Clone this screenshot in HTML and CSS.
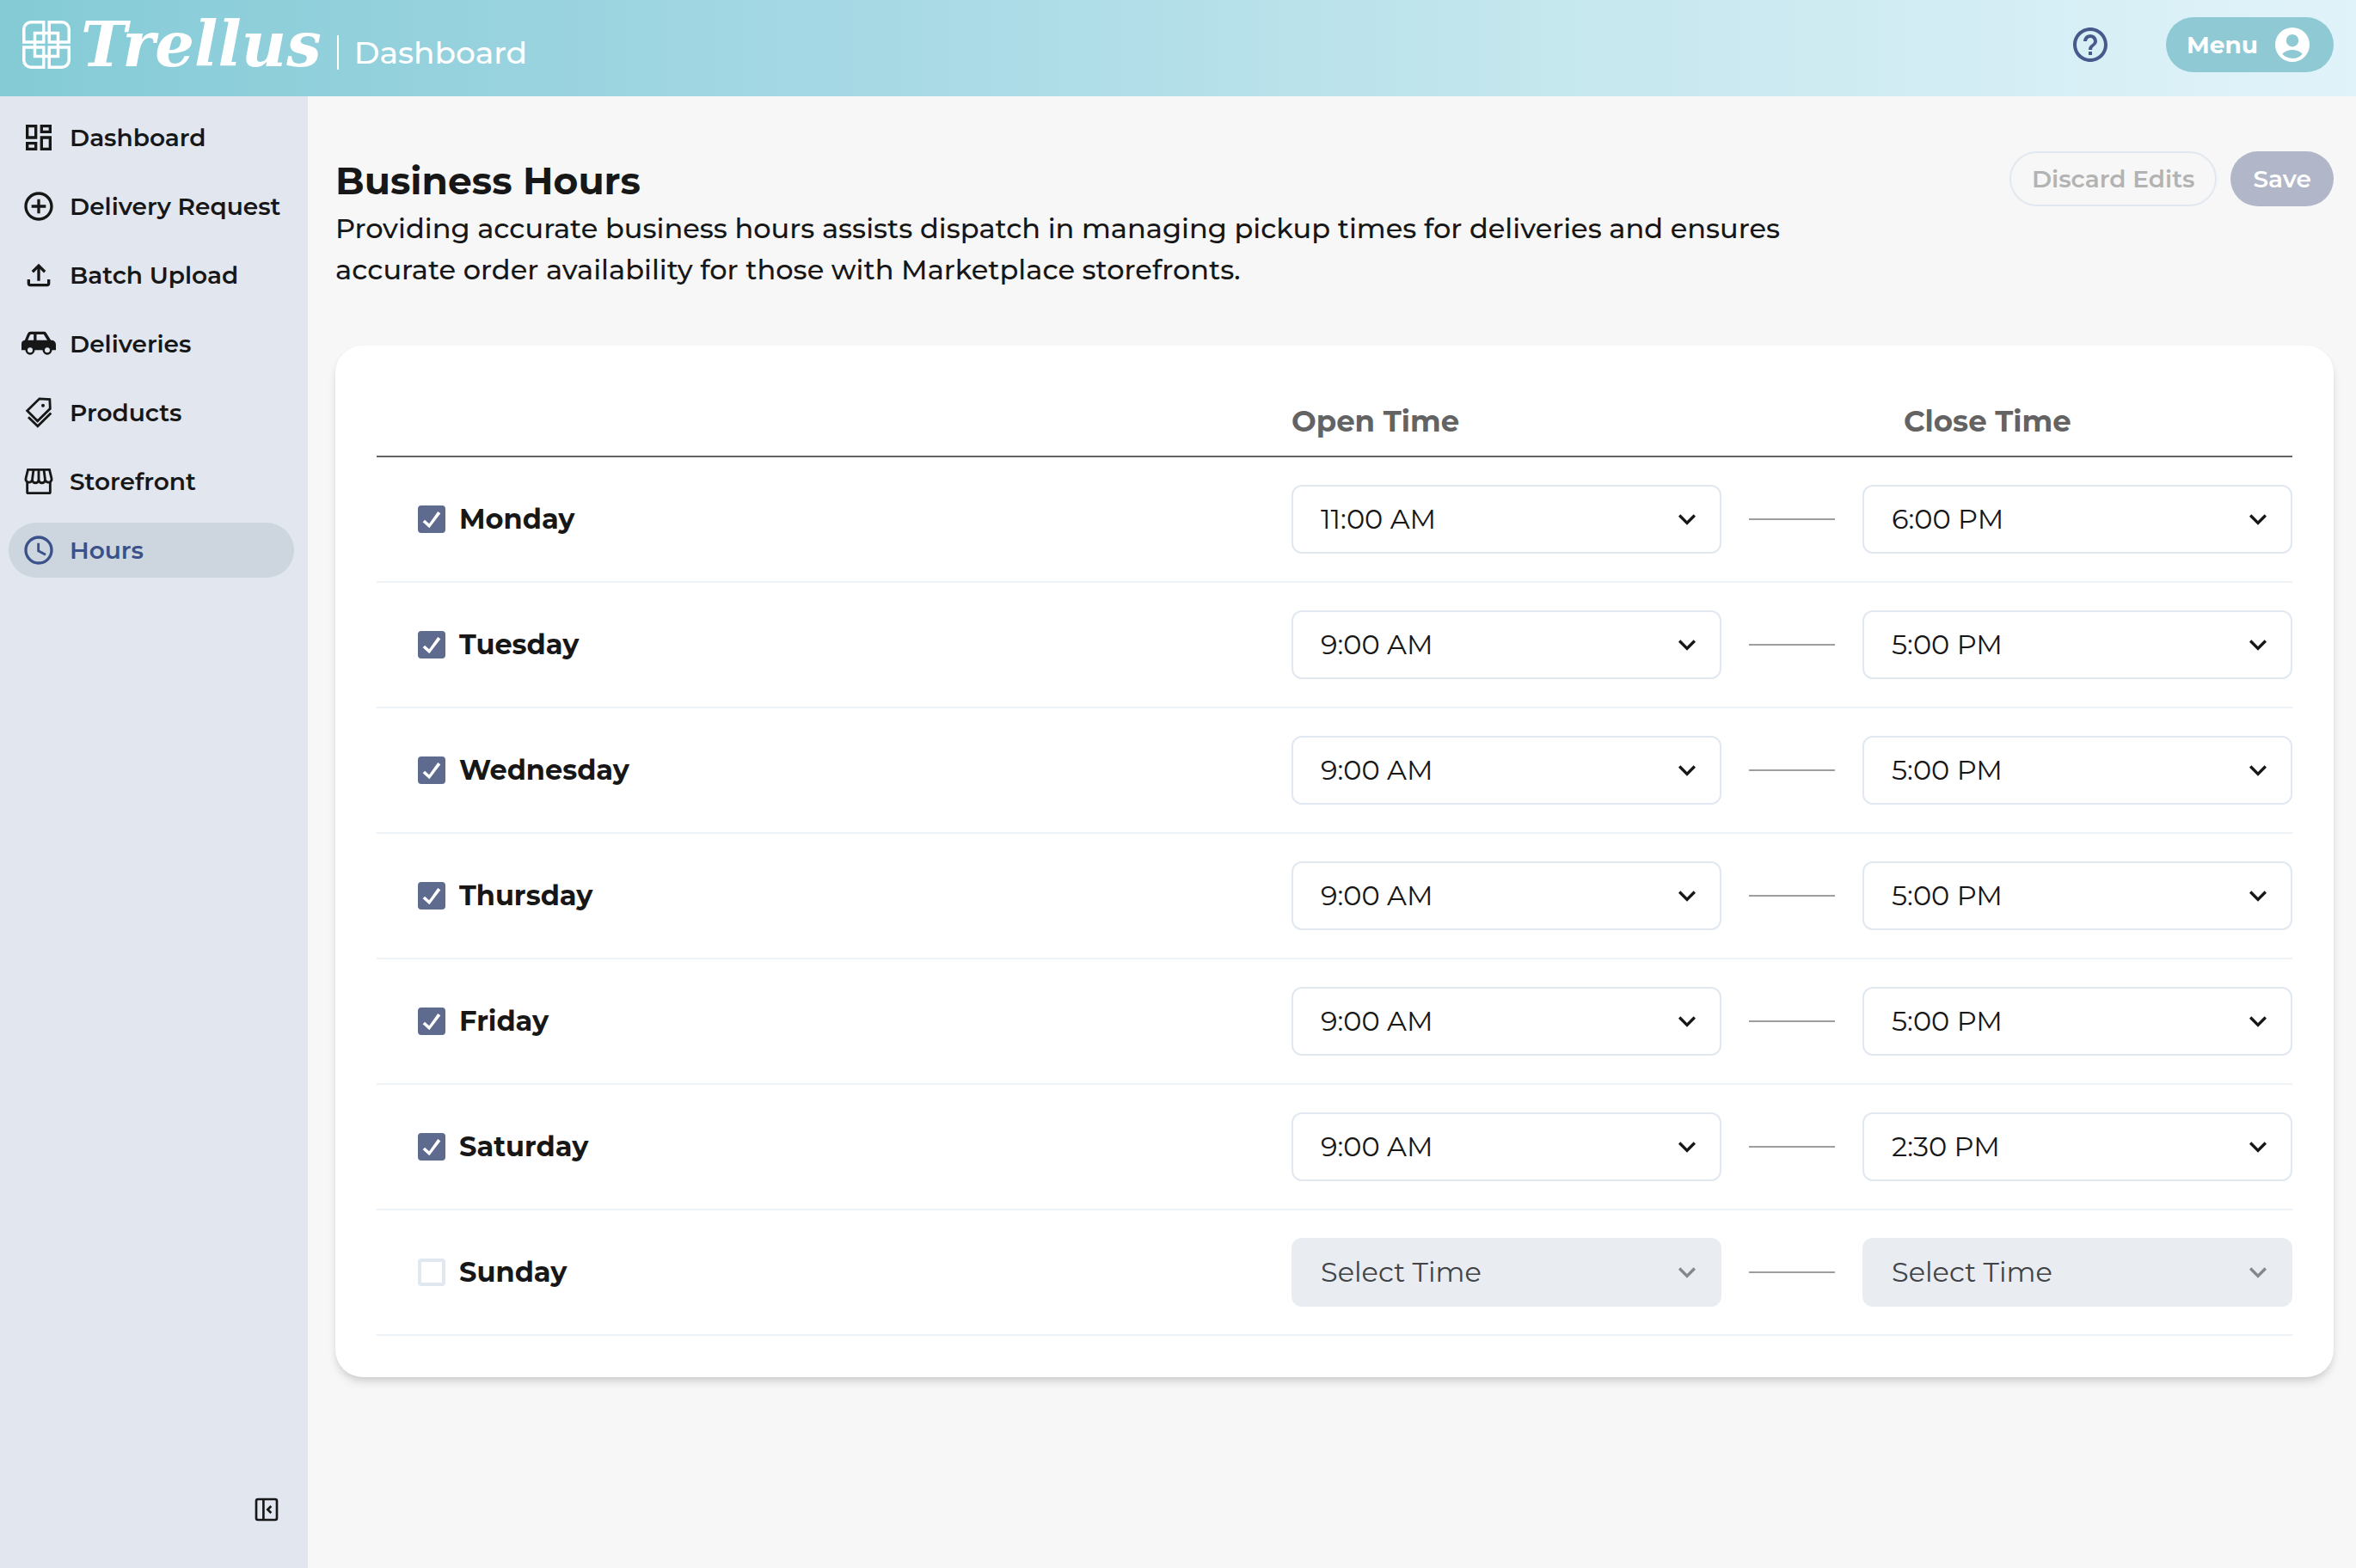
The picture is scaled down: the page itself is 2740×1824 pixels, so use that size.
FILE: index.html
```html
<!DOCTYPE html>
<html lang="en">
<head>
	<meta charset="utf-8">
	<meta name="viewport" content="width=device-width, initial-scale=1">
	<title>Business Hours</title>
	<link rel="stylesheet" href="styles.css">
</head>
<body>
	<!-- shared icons -->
	<svg class="sprite" aria-hidden="true">
		<symbol id="chevron" viewBox="0 0 24 24">
			<path d="M16.59 8.59L12 13.17 7.41 8.59 6 10l6 6 6-6z"/>
		</symbol>
	</svg>

	<header class="topbar">
		<a class="brand" href="#">
			<svg class="brand-mark" viewBox="0 0 56 56" aria-hidden="true">
				<path d="M10 1.750H24.750V25H1.750V10A8.250 8.250 0 0 1 10 1.750z"/>
				<path d="M46 1.750H31.250V25H54.250V10A8.250 8.250 0 0 0 46 1.750z"/>
				<path d="M10 54.250H24.750V31H1.750V46A8.250 8.250 0 0 0 10 54.250z"/>
				<path d="M46 54.250H31.250V31H54.250V46A8.250 8.250 0 0 1 46 54.250z"/>
				<path d="M14.500 14.500H41.500V41.500H14.500z"/>
			</svg>
			<span class="brand-name">Trellus</span>
		</a>
		<span class="brand-section">Dashboard</span>
		<div class="topbar-actions">
			<a class="help" href="#" aria-label="Help">
				<svg viewBox="0 0 24 24" aria-hidden="true"><path d="M11 18h2v-2h-2v2zm1-16C6.480 2 2 6.480 2 12s4.480 10 10 10 10-4.480 10-10S17.520 2 12 2zm0 18c-4.410 0-8-3.590-8-8s3.590-8 8-8 8 3.590 8 8-3.590 8-8 8zm0-14c-2.210 0-4 1.790-4 4h2c0-1.100.9-2 2-2s2 .9 2 2c0 2-3 1.750-3 5h2c0-2.250 3-2.500 3-5 0-2.210-1.790-4-4-4z"/></svg>
			</a>
			<button class="btn btn-menu" type="button">
				Menu
				<svg viewBox="0 0 24 24" aria-hidden="true"><path fill-rule="evenodd" d="M12 2a10 10 0 1 0 0 20 10 10 0 0 0 0-20zm0 4a3.600 3.600 0 1 1 0 7.200A3.600 3.600 0 0 1 12 6zm0 14c-2.300 0-4.400-1-5.900-2.600C7.500 15.900 9.800 15 12 15s4.500.9 5.900 2.400A8 8 0 0 1 12 20z"/></svg>
			</button>
		</div>
	</header>

	<div class="layout">
		<nav class="sidebar">
			<a class="nav-item" href="#">
				<svg viewBox="0 0 24 24" aria-hidden="true"><path d="M19 5v2h-4V5h4M9 5v6H5V5h4m10 8v6h-4v-6h4M9 17v2H5v-2h4M21 3h-8v6h8V3zM11 3H3v10h8V3zm10 8h-8v10h8V11zm-10 4H3v6h8v-6z"/></svg>
				Dashboard
			</a>
			<a class="nav-item" href="#">
				<svg viewBox="0 0 24 24" aria-hidden="true"><path d="M13 7h-2v4H7v2h4v4h2v-4h4v-2h-4V7zm-1-5C6.490 2 2 6.490 2 12s4.490 10 10 10 10-4.490 10-10S17.510 2 12 2zm0 18c-4.410 0-8-3.590-8-8s3.590-8 8-8 8 3.590 8 8-3.590 8-8 8z"/></svg>
				Delivery Request
			</a>
			<a class="nav-item" href="#">
				<svg viewBox="0 0 24 24" aria-hidden="true"><path d="M11 16V7.850l-2.600 2.600L7 9l5-5 5 5-1.400 1.450-2.600-2.600V16h-2zm-5 4c-1.100 0-2-.9-2-2v-3h2v3h12v-3h2v3c0 1.100-.9 2-2 2H6z"/></svg>
				Batch Upload
			</a>
			<a class="nav-item" href="#">
				<svg viewBox="0 0 24 24" aria-hidden="true"><path fill-rule="evenodd" d="M15.600 3.500H6.300a2.200 2.200 0 0 0-2 1.300L2.300 9.500A2.600 2.600 0 0 0 0 12v4.300h2.700a3.300 3.300 0 0 0 6.600 0h5.400a3.300 3.300 0 0 0 6.600 0H24V12.400a2.900 2.900 0 0 0-2.900-2.900h-.6l-3.200-5.200a2 2 0 0 0-1.700-.8zM8.500 5.400v4H4.400l1.500-3.500a.9.900 0 0 1 .8-.5h1.800zm2 0h5l2.500 4h-7.500v-4zM6 14.500a1.800 1.800 0 1 1 0 3.600 1.800 1.800 0 0 1 0-3.600zm12 0a1.800 1.800 0 1 1 0 3.600 1.800 1.800 0 0 1 0-3.600z"/></svg>
				Deliveries
			</a>
			<a class="nav-item" href="#">
				<svg class="line-icon" viewBox="0 0 24 24" aria-hidden="true">
					<path class="thin" d="M12.500 2.300L19.700 2.800l.3 6.400-8.800 8.600L4 10.700z"/>
					<path class="thin" d="M4.800 15.200l6.500 6.300 9.300-9.200"/>
					<circle class="dot" cx="15" cy="7" r="1.200"/>
				</svg>
				Products
			</a>
			<a class="nav-item" href="#">
				<svg class="line-icon" viewBox="0 0 24 24" aria-hidden="true">
					<path class="thin" d="M4.500 3.800h15L21 10a2.200 2.200 0 0 1-4.500.8 2.200 2.200 0 0 1-4.500 0 2.200 2.200 0 0 1-4.500 0A2.200 2.200 0 0 1 3 10z"/>
					<path class="thin" d="M8.400 3.800l-.9 7M12 3.800v7M15.600 3.800l.9 7"/>
					<path class="thin" d="M4 12v7.500a.7.700 0 0 0 .7.700h14.600a.7.700 0 0 0 .7-.7V12"/>
				</svg>
				Storefront
			</a>
			<a class="nav-item active" href="#" aria-current="page">
				<svg class="line-icon" viewBox="0 0 24 24" aria-hidden="true">
					<circle cx="12" cy="12" r="9"/>
					<path class="thin" d="M11.800 7v5.500l5 2.700"/>
				</svg>
				Hours
			</a>
			<button class="collapse" type="button" aria-label="Collapse sidebar">
				<svg class="line-icon" viewBox="0 0 24 24" aria-hidden="true">
					<rect x="3" y="3" width="18" height="18" rx="1.500"/>
					<path d="M9.300 3v18M16 9l-3 3 3 3"/>
				</svg>
			</button>
		</nav>

		<main class="content">
			<div class="page-head">
				<div class="page-intro">
					<h1>Business Hours</h1>
					<p>Providing accurate business hours assists dispatch in managing pickup times for deliveries and ensures accurate order availability for those with Marketplace storefronts.</p>
				</div>
				<div class="page-actions">
					<button class="btn btn-outline" type="button" disabled>Discard Edits</button>
					<button class="btn btn-save" type="button" disabled>Save</button>
				</div>
			</div>

			<div class="card">
				<table class="hours">
					<thead>
						<tr>
							<td class="col-day"></td>
							<th class="col-open" scope="col">Open Time</th>
							<td class="col-dash"></td>
							<th class="col-close" scope="col">Close Time</th>
						</tr>
					</thead>
					<tbody>
						<tr>
							<th scope="row"><label class="day"><input type="checkbox" checked>Monday</label></th>
							<td class="open"><div class="select"><select aria-label="Monday open time"><option>11:00 AM</option></select><svg><use href="#chevron"/></svg></div></td>
							<td class="dash"><hr></td>
							<td><div class="select"><select aria-label="Monday close time"><option>6:00 PM</option></select><svg><use href="#chevron"/></svg></div></td>
						</tr>
						<tr>
							<th scope="row"><label class="day"><input type="checkbox" checked>Tuesday</label></th>
							<td class="open"><div class="select"><select aria-label="Tuesday open time"><option>9:00 AM</option></select><svg><use href="#chevron"/></svg></div></td>
							<td class="dash"><hr></td>
							<td><div class="select"><select aria-label="Tuesday close time"><option>5:00 PM</option></select><svg><use href="#chevron"/></svg></div></td>
						</tr>
						<tr>
							<th scope="row"><label class="day"><input type="checkbox" checked>Wednesday</label></th>
							<td class="open"><div class="select"><select aria-label="Wednesday open time"><option>9:00 AM</option></select><svg><use href="#chevron"/></svg></div></td>
							<td class="dash"><hr></td>
							<td><div class="select"><select aria-label="Wednesday close time"><option>5:00 PM</option></select><svg><use href="#chevron"/></svg></div></td>
						</tr>
						<tr>
							<th scope="row"><label class="day"><input type="checkbox" checked>Thursday</label></th>
							<td class="open"><div class="select"><select aria-label="Thursday open time"><option>9:00 AM</option></select><svg><use href="#chevron"/></svg></div></td>
							<td class="dash"><hr></td>
							<td><div class="select"><select aria-label="Thursday close time"><option>5:00 PM</option></select><svg><use href="#chevron"/></svg></div></td>
						</tr>
						<tr>
							<th scope="row"><label class="day"><input type="checkbox" checked>Friday</label></th>
							<td class="open"><div class="select"><select aria-label="Friday open time"><option>9:00 AM</option></select><svg><use href="#chevron"/></svg></div></td>
							<td class="dash"><hr></td>
							<td><div class="select"><select aria-label="Friday close time"><option>5:00 PM</option></select><svg><use href="#chevron"/></svg></div></td>
						</tr>
						<tr>
							<th scope="row"><label class="day"><input type="checkbox" checked>Saturday</label></th>
							<td class="open"><div class="select"><select aria-label="Saturday open time"><option>9:00 AM</option></select><svg><use href="#chevron"/></svg></div></td>
							<td class="dash"><hr></td>
							<td><div class="select"><select aria-label="Saturday close time"><option>2:30 PM</option></select><svg><use href="#chevron"/></svg></div></td>
						</tr>
						<tr>
							<th scope="row"><label class="day"><input type="checkbox">Sunday</label></th>
							<td class="open"><div class="select"><select aria-label="Sunday open time" disabled><option>Select Time</option></select><svg><use href="#chevron"/></svg></div></td>
							<td class="dash"><hr></td>
							<td><div class="select"><select aria-label="Sunday close time" disabled><option>Select Time</option></select><svg><use href="#chevron"/></svg></div></td>
						</tr>
					</tbody>
				</table>
			</div>
		</main>
	</div>
</body>
</html>
```
FILE: styles.css
```css
* {
	box-sizing: border-box;
}
body {
	margin: 0;
	min-height: 100vh;
	display: flex;
	flex-direction: column;
	font-family: Montserrat, Inter, "Liberation Sans", sans-serif;
	font-size: 32px;
	line-height: 48px;
	color: #171717;
	background-color: #f7f7f7;
}
a {
	color: inherit;
	text-decoration: none;
}
button {
	font-family: inherit;
	cursor: pointer;
}
svg {
	display: block;
	fill: currentColor;
}
.sprite {
	position: absolute;
	width: 0;
	height: 0;
}
.line-icon {
	fill: none;
	stroke: currentColor;
	stroke-width: 2;
}
.line-icon .dot {
	fill: currentColor;
	stroke: none;
}
.line-icon .thin {
	stroke-width: 1.7;
}

/* top bar */
.topbar {
	display: flex;
	align-items: center;
	height: 112px;
	padding: 0 26px 8px;
	color: #fff;
	background: linear-gradient(90deg, #84cbd6, #9bd4e0 25%, #afdde8 46%, #c3e6ed 64%, #e1f3fa);
}
.brand {
	display: flex;
	align-items: center;
	gap: 12px;
}
.brand-mark {
	width: 56px;
	height: 56px;
	fill: none;
	stroke: #fff;
	stroke-width: 3.5;
}
.brand-name {
	font-family: "DejaVu Serif", serif;
	font-size: 72px;
	font-weight: bold;
	font-style: italic;
	line-height: 104px;
}
.brand-section {
	margin: 18px 0 0 18px;
	padding-left: 18px;
	border-left: 2px solid #fff;
	font-size: 36px;
	font-weight: 500;
	line-height: 40px;
}
.topbar-actions {
	display: flex;
	align-items: center;
	gap: 64px;
	margin-left: auto;
}
.help svg {
	width: 48px;
	height: 48px;
	color: #485a8b;
}

/* buttons */
.btn {
	height: 64px;
	padding: 0 26px;
	border: none;
	border-radius: 32px;
	font-size: 28px;
	font-weight: 600;
	color: #fff;
}
.btn-menu {
	display: flex;
	align-items: center;
	gap: 16px;
	padding: 0 24px;
	font-weight: 700;
	background-color: #8fc9d3;
}
.btn-menu svg {
	width: 48px;
	height: 48px;
}
.btn-outline {
	padding: 0 24px;
	border: 2px solid #e2e8f0;
	color: #b3b3b3;
	background-color: transparent;
}
.btn-save {
	background-color: #b1b7c8;
}

/* sidebar */
.layout {
	flex: 1;
	display: flex;
}
.sidebar {
	flex: none;
	display: flex;
	flex-direction: column;
	gap: 16px;
	width: 358px;
	padding: 16px 16px 52px 10px;
	background-color: #e2e7ef;
}
.nav-item {
	display: flex;
	align-items: center;
	gap: 16px;
	height: 64px;
	padding-left: 15px;
	border-radius: 32px;
	font-size: 28px;
	font-weight: 600;
	white-space: nowrap;
}
.nav-item svg {
	width: 40px;
	height: 40px;
}
.nav-item.active {
	color: #3a5189;
	background-color: #cdd5df;
}
.collapse {
	align-self: flex-end;
	margin: auto 16px 0 0;
	padding: 0;
	border: none;
	color: inherit;
	background: none;
}
.collapse svg {
	width: 32px;
	height: 32px;
}

/* page */
.content {
	flex: 1;
	min-width: 0;
	padding: 64px 26px 64px 32px;
}
.page-head {
	display: flex;
	justify-content: space-between;
	align-items: flex-start;
}
.page-intro {
	max-width: 1740px;
	padding-top: 4px;
}
.page-intro h1 {
	margin: 0 0 2px;
	font-size: 44px;
	font-weight: 700;
	line-height: 60px;
}
.page-intro p {
	margin: 0;
	font-weight: 500;
}
.page-actions {
	display: flex;
	gap: 16px;
}
.card {
	margin-top: 64px;
	padding: 48px;
	border-radius: 32px;
	background-color: #fff;
	box-shadow: 0 8px 12px -2px rgba(0, 0, 0, .1), 0 4px 8px -2px rgba(0, 0, 0, .1);
}

/* hours table */
.hours {
	width: 100%;
	border-collapse: separate;
	border-spacing: 0;
	table-layout: fixed;
}
.hours th,
.hours td {
	height: 146px;
	padding: 0;
	border-bottom: 2px solid #edf2f7;
	text-align: left;
}
.hours thead th,
.hours thead td {
	height: 82px;
	border-bottom-color: #636363;
	font-size: 34px;
	font-weight: 700;
	color: #636363;
}
.hours .col-open {
	width: 548px;
	padding-left: 48px;
}
.hours .col-dash {
	width: 164px;
}
.hours .col-close {
	width: 500px;
	padding-left: 48px;
}
.hours .open {
	padding-left: 48px;
}
.hours .dash {
	padding: 0 32px;
}
.dash hr {
	margin: 0;
	border: none;
	border-top: 2px solid #9e9e9e;
}
.day {
	display: flex;
	align-items: center;
	gap: 16px;
	padding-left: 48px;
	font-weight: 700;
}
.day input {
	appearance: none;
	width: 32px;
	height: 32px;
	margin: 0;
	border: 4px solid #e2e8f0;
	border-radius: 4px;
}
.day input:checked {
	border-color: #5f6b8e;
	background-color: #5f6b8e;
}
.day input:checked::after {
	content: "";
	display: block;
	width: 24px;
	height: 24px;
	background-color: #fff;
	clip-path: polygon(17% 53%, 38% 72%, 80% 13%, 93% 22%, 39% 93%, 7% 64%);
}
.select {
	position: relative;
}
.select select {
	appearance: none;
	display: block;
	width: 100%;
	height: 80px;
	padding: 0 64px 0 32px;
	border: 2px solid #e2e8f0;
	border-radius: 12px;
	font: inherit;
	color: #171717;
	background-color: #fff;
}
.select svg {
	position: absolute;
	top: 20px;
	right: 20px;
	width: 40px;
	height: 40px;
	pointer-events: none;
}
.select select:disabled {
	opacity: 1;
	border-color: #e9ecf1;
	color: #404347;
	background-color: #e9ecf1;
}
.select select:disabled + svg {
	color: #85878a;
}
```
